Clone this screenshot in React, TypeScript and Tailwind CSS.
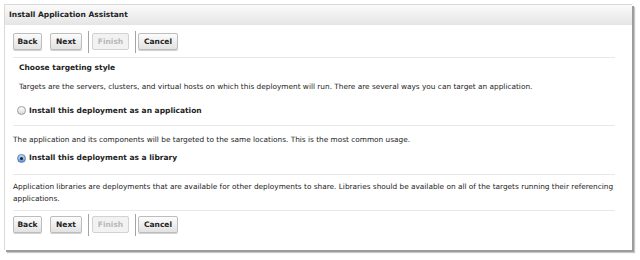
import React from "react";

function Btn({ label, w, disabled = false }: { label: string; w: string; disabled?: boolean }) {
  return (
    <button
      type="button"
      disabled={disabled}
      className={
        disabled
          ? `${w} h-[17px] shrink-0 rounded-[2px] border border-[#d2d2d2] bg-[#f2f2f2] text-[7.5px] font-bold text-[#b8b8b8]`
          : `${w} h-[17px] shrink-0 rounded-[2px] border border-[#bdbdbd] bg-gradient-to-b from-[#fcfcfc] to-[#e2e2e2] text-[7.5px] font-bold text-[#222] shadow-[0_1px_0_#d0d0d0]`
      }
    >
      {label}
    </button>
  );
}

function Sep() {
  return <div className="h-[22px] w-px shrink-0 bg-[#a4a4a4]" />;
}

function ButtonBar() {
  return (
    <div className="flex h-[17px] items-center pl-[8px]">
      <Btn label="Back" w="w-[29px]" />
      <div className="w-[8px]" />
      <Btn label="Next" w="w-[32px]" />
      <div className="w-[6px]" />
      <Sep />
      <div className="w-[3px]" />
      <Btn label="Finish" w="w-[37px]" disabled />
      <div className="w-[6px]" />
      <Sep />
      <div className="w-[2px]" />
      <Btn label="Cancel" w="w-[40px]" />
    </div>
  );
}

function Radio({ checked }: { checked?: boolean }) {
  return checked ? (
    <span className="grid size-[9px] shrink-0 place-items-center rounded-full border border-[#5a7fae] bg-gradient-to-b from-[#c9def5] to-[#5e95d6]">
      <span className="size-[3px] rounded-full bg-[#10243f]" />
    </span>
  ) : (
    <span className="size-[9px] shrink-0 rounded-full border border-[#9a9a9a] bg-gradient-to-b from-[#ffffff] to-[#d8d8d8]" />
  );
}

function Divider() {
  return <div className="ml-[8px] mr-[17px] h-px bg-[#e8e8e8]" />;
}

export default function App() {
  return (
    <div className="h-[260px] w-[640px] bg-white pl-[4px] pt-[4px] font-['DejaVu_Sans',sans-serif] text-[#222]">
      <div className="h-[246px] w-[628px] border-t border-l border-[#d9d9d9] bg-white shadow-[2px_2px_0_#9c9c9c,3px_3px_1px_#c8c8c8]">
        <div className="flex h-[20px] items-center bg-gradient-to-b from-[#fafafa] to-[#e5e5e5] pl-[4px] text-[7.5px] font-bold">
          Install Application Assistant
        </div>
        <div className="pt-[8px]">
          <ButtonBar />
        </div>
        <div className="mt-[7px]">
          <Divider />
        </div>
        <div className="flex h-[20px] items-center pl-[14px] text-[7.5px] font-bold">Choose targeting style</div>
        <div className="flex h-[18px] items-center pl-[14px] text-[7.35px]">
          Targets are the servers, clusters, and virtual hosts on which this deployment will run. There are several
          ways you can target an application.
        </div>
        <div className="flex h-[29px] items-center gap-[3px] pl-[12px] text-[7.5px] font-bold">
          <Radio />
          Install this deployment as an application
        </div>
        <Divider />
        <div className="mt-[5px] flex h-[18px] items-center pl-[8px] text-[7.35px]">
          The application and its components will be targeted to the same locations. This is the most common usage.
        </div>
        <div className="flex h-[18px] items-center gap-[3px] pl-[12px] text-[7.5px] font-bold">
          <Radio checked />
          Install this deployment as a library
        </div>
        <div className="mt-[7px]">
          <Divider />
        </div>
        <div className="mt-[6px] w-[620px] pl-[8px] text-[7.35px] leading-[12px]">
          Application libraries are deployments that are available for other deployments to share. Libraries should
          be available on all of the targets running their referencing applications.
        </div>
        <div className="mt-[5px]">
          <Divider />
        </div>
        <div className="pt-[5px]">
          <ButtonBar />
        </div>
      </div>
    </div>
  );
}
